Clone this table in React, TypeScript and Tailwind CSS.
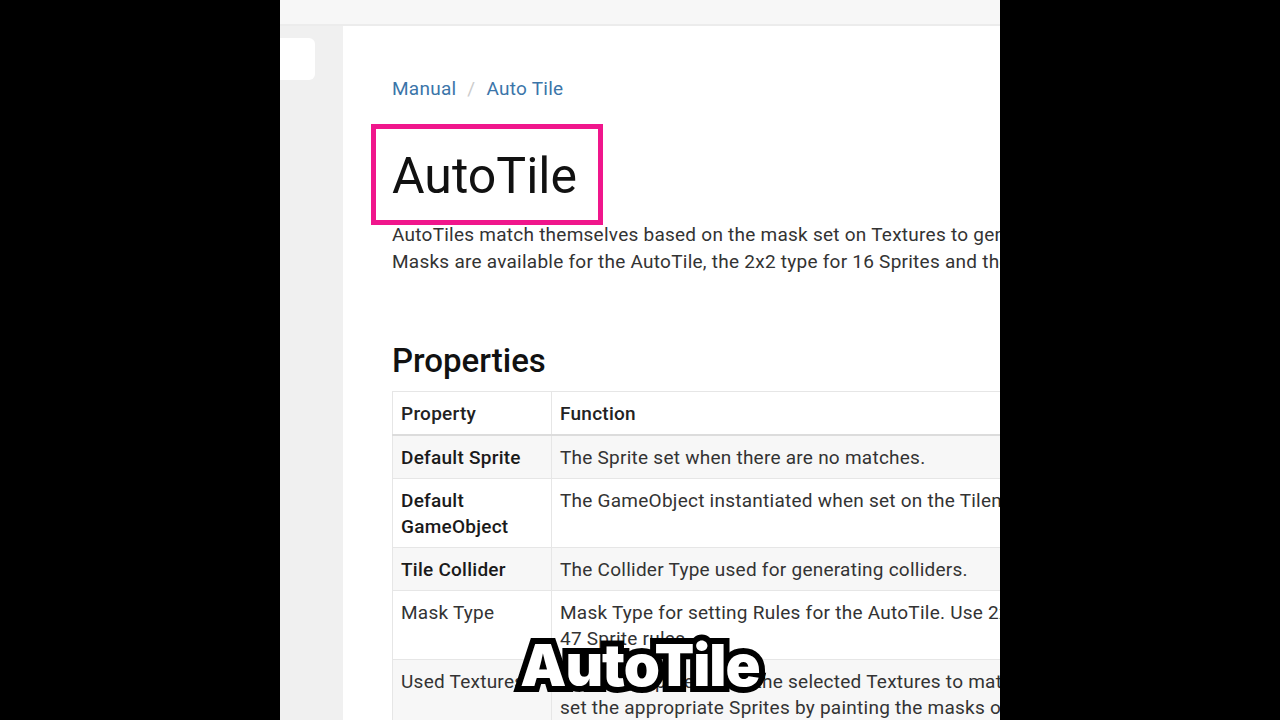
const rows = [
  { prop: 'Default Sprite', fn: ['The Sprite set when there are no matches.'], bold: true },
  { prop: 'Default GameObject', fn: ['The GameObject instantiated when set on the Tilemap.'], bold: true },
  { prop: 'Tile Collider', fn: ['The Collider Type used for generating colliders.'], bold: true },
  { prop: 'Mask Type', fn: ['Mask Type for setting Rules for the AutoTile. Use 2x2 for 16 Sprite rules and 3x3 for', '47 Sprite rules.'], bold: false },
  { prop: 'Used Textures', fn: ['Loads all Sprites from the selected Textures to match and', 'set the appropriate Sprites by painting the masks on them.'], bold: false },
];

export default function App() {
  return (
    <div className="flex w-[1280px] h-[720px] overflow-hidden bg-black font-['Roboto','Liberation_Sans',sans-serif]">
      <div className="w-[280px] shrink-0 bg-black" />

      <div className="relative w-[720px] shrink-0 overflow-hidden bg-white flex flex-col">
        {/* top bar */}
        <div className="h-[26px] shrink-0 bg-[#f7f7f7] border-b-2 border-[#ececec]" />

        <div className="flex flex-1 min-h-0">
          {/* sidebar */}
          <div className="w-[63px] shrink-0 bg-[#f0f0f0] pt-[12px]">
            <div className="w-[35px] h-[42px] bg-white rounded-r-[6px]" />
          </div>

          {/* content */}
          <div className="w-[1000px] shrink-0 pl-[49px] pt-[49px] text-[#333] tracking-[0.25px]">
            <div className="flex items-center gap-[11px] text-[19px] leading-[27px] text-[#3b75a9]">
              <span>Manual</span>
              <span className="text-[#cccccc]">/</span>
              <span>Auto Tile</span>
            </div>

            <div className="relative mt-[44px]">
              <h1 className="text-[50px] leading-[60px] tracking-normal text-[#111]">AutoTile</h1>
              <div className="absolute left-[-21px] top-[-22px] w-[232px] h-[101px] border-[5px] border-[#f0168c]" />
            </div>

            <p className="mt-[15px] text-[19px] leading-[27px] text-[#333] whitespace-nowrap">
              AutoTiles match themselves based on the mask set on Textures to generate the AutoTile ruleset.
              <br />
              Masks are available for the AutoTile, the 2x2 type for 16 Sprites and the 3x3 type for 47 Sprites.
            </p>

            <h2 className="mt-[66px] text-[33px] leading-[40px] tracking-normal font-medium text-[#111]">Properties</h2>

            <table className="mt-[10px] w-[900px] border-collapse text-[19px] leading-[26px] text-[#222]">
              <thead>
                <tr className="bg-white">
                  <th className="w-[159px] border border-[#e6e6e6] border-b-2 border-b-[#dcdcdc] px-[8px] pt-[9px] pb-[7px] text-left font-medium">Property</th>
                  <th className="border border-[#e6e6e6] border-b-2 border-b-[#dcdcdc] px-[8px] pt-[9px] pb-[7px] text-left font-medium">Function</th>
                </tr>
              </thead>
              <tbody>
                {rows.map((r, i) => (
                  <tr key={r.prop} className={i % 2 === 0 ? 'bg-[#f7f7f7]' : 'bg-white'}>
                    <td className={`w-[159px] border border-[#e6e6e6] px-[8px] pt-[9px] pb-[7px] align-top ${r.bold ? 'font-medium text-[#1a1a1a]' : 'text-[#333]'}`}>
                      {r.prop}
                    </td>
                    <td className="border border-[#e6e6e6] px-[8px] pt-[9px] pb-[7px] align-top text-[#333] whitespace-nowrap">
                      {r.fn.map(line => (
                        <div key={line}>{line}</div>
                      ))}
                    </td>
                  </tr>
                ))}
              </tbody>
            </table>
          </div>
        </div>

        {/* caption overlay */}
        <div className="absolute left-0 right-0 top-[629px] flex justify-center">
          <span className="font-['Inter','Liberation_Sans',sans-serif] font-black text-[58px] leading-[72px] tracking-[-1px] text-white [-webkit-text-stroke:12px_#000] [paint-order:stroke_fill]">
            AutoTile
          </span>
        </div>
      </div>

      <div className="flex-1 bg-black" />
    </div>
  );
}
